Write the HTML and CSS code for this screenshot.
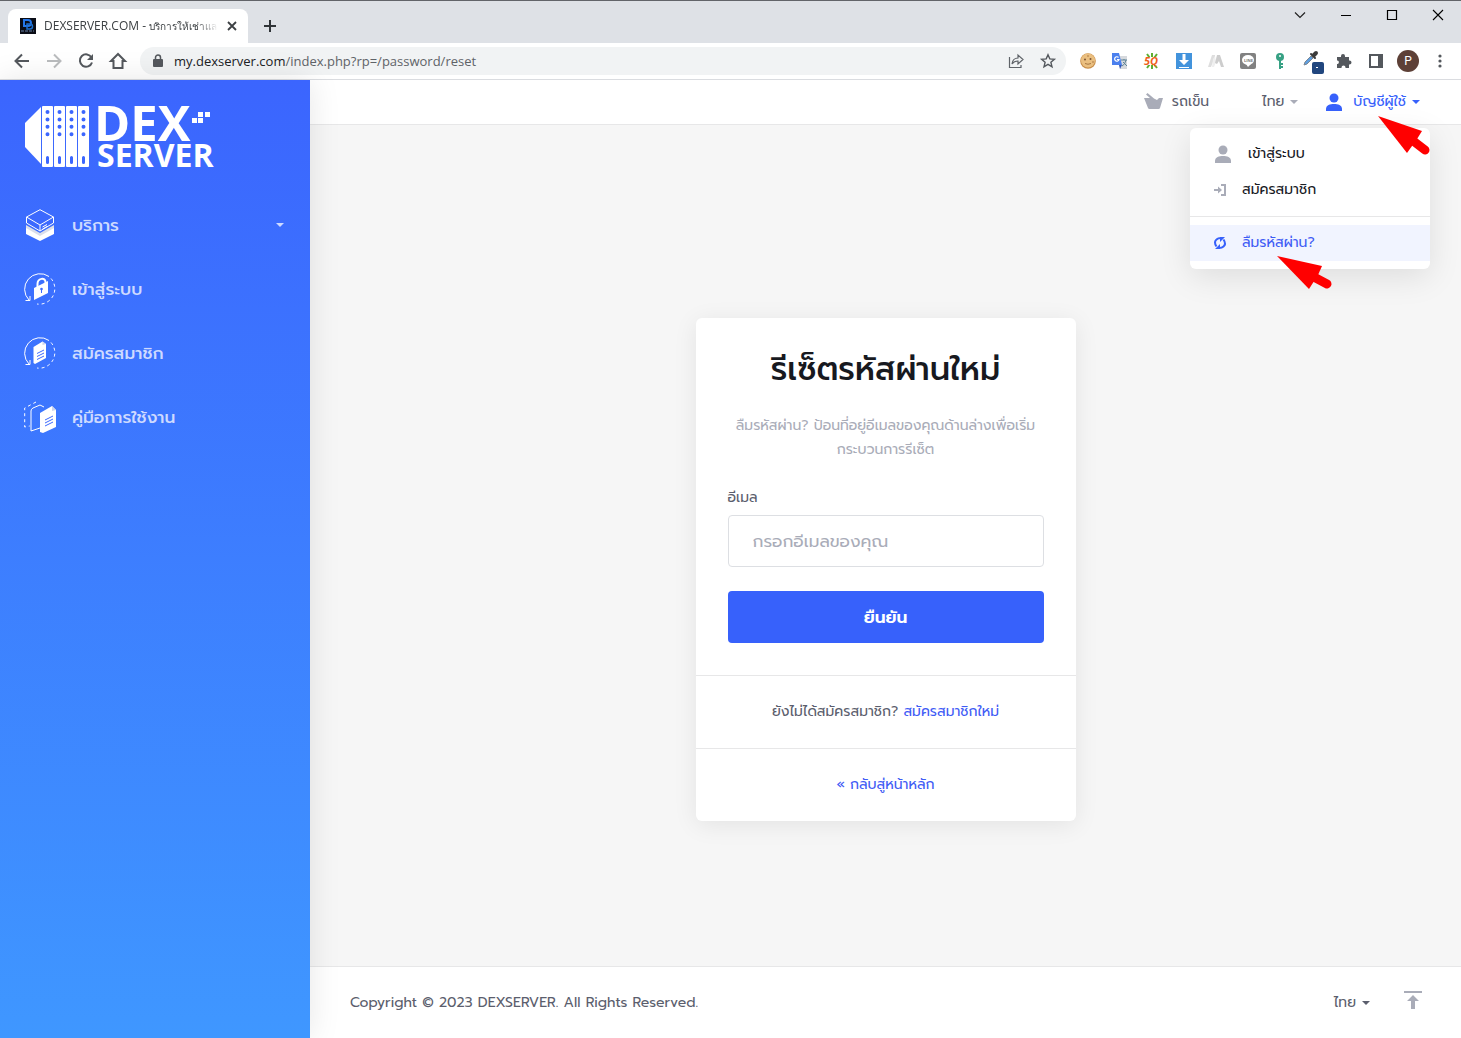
FILE: index.html
```
<!DOCTYPE html>
<html lang="th">
<head>
    <meta charset="UTF-8">
    <meta name="viewport" content="width=device-width, initial-scale=1.0">
    <title>DEXSERVER.COM</title>
    <link rel="stylesheet" href="styles.css">
</head>
<body>
    <div class="browser">
        <div class="tab-strip">
            <div class="tab">
                <svg class="favicon" width="16" height="16" viewBox="0 0 16 16"><rect width="16" height="16" fill="#0b0d16"/><path d="M4 2h4a3 3 0 0 1 0 6H4z" fill="none" stroke="#2476e8" stroke-width="2"/><path d="M7 6h3a2.500 2.500 0 0 1 0 5H7z" fill="none" stroke="#1c6fce" stroke-width="1.500"/><path d="M1 13h13" stroke="#39475f" stroke-width="2" stroke-dasharray="3 1"/></svg>
                <span class="tab-title">DEXSERVER.COM - <small>บริการให้เช่าและ</small></span>
                <button class="chrome-button tab-close" aria-label="Close tab"><svg width="10" height="10" viewBox="0 0 10 10"><path d="M1 1l8 8M9 1l-8 8" stroke="#3c4043" stroke-width="1.800"/></svg></button>
            </div>
            <button class="chrome-button new-tab" aria-label="New tab"><svg width="12" height="12" viewBox="0 0 12 12"><path d="M6 0v12M0 6h12" stroke="#2f3337" stroke-width="2"/></svg></button>
            <div class="window-buttons">
                <button class="chrome-button" aria-label="Search tabs"><svg width="12" height="12" viewBox="0 0 12 12"><path d="M1 3.500l5 5 5-5" fill="none" stroke="#222" stroke-width="1.200"/></svg></button>
                <button class="chrome-button" aria-label="Minimize"><svg width="12" height="12" viewBox="0 0 12 12"><path d="M1 6.500h10" stroke="#000"/></svg></button>
                <button class="chrome-button" aria-label="Maximize"><svg width="12" height="12" viewBox="0 0 12 12"><path d="M1.500 1.500h9v9h-9z" fill="none" stroke="#000" stroke-width="1.200"/></svg></button>
                <button class="chrome-button" aria-label="Close"><svg width="12" height="12" viewBox="0 0 12 12"><path d="M1 1l10 10M11 1L1 11" stroke="#000" stroke-width="1.100"/></svg></button>
            </div>
        </div>
        <div class="toolbar">
            <div class="nav-buttons">
                <button class="chrome-button" aria-label="Back"><svg width="16" height="16" viewBox="0 0 16 16"><path d="M15 8H2M8 1.500L1.500 8 8 14.500" fill="none" stroke="#54585d" stroke-width="2"/></svg></button>
                <button class="chrome-button" aria-label="Forward"><svg width="16" height="16" viewBox="0 0 16 16"><path d="M1 8h13M8 1.500L14.500 8 8 14.500" fill="none" stroke="#babcbe" stroke-width="2"/></svg></button>
                <button class="chrome-button" aria-label="Reload"><svg width="16" height="16" viewBox="0 0 16 16"><path d="M13.500 4.500A6.200 6.200 0 1 0 14 9.500" fill="none" stroke="#54585d" stroke-width="2"/><path d="M15 1v6H9z" fill="#54585d"/></svg></button>
                <button class="chrome-button" aria-label="Home"><svg width="18" height="18" viewBox="0 0 18 18"><path d="M9 2L2 9h2.500v7h9V9H16z" fill="none" stroke="#54585d" stroke-width="2"/></svg></button>
            </div>
            <div class="address-bar">
                <svg width="10" height="14" viewBox="0 0 10 14"><rect y="5" width="10" height="8" rx="1" fill="#54585d"/><path d="M2.500 6V3.500a2.500 2.500 0 0 1 5 0V6" fill="none" stroke="#54585d" stroke-width="1.500"/></svg>
                <div class="url">my.dexserver.com<span>/index.php?rp=/password/reset</span></div>
                <button class="chrome-button" aria-label="Share"><svg width="16" height="16" viewBox="0 0 16 16"><path d="M1.500 4v10.500H13V12M4 11c.5-4 3-6 6-6V2l5 4.500-5 4.500V8c-2.500 0-4.500.8-6 3z" fill="none" stroke="#5f6368" stroke-width="1.200"/></svg></button>
                <button class="chrome-button" aria-label="Bookmark"><svg width="16" height="16" viewBox="0 0 16 16"><path d="M8 1.800l1.800 4.100 4.600.4-3.500 3 1.100 4.500L8 11.400l-4 2.400 1.100-4.500-3.500-3 4.600-.4z" fill="none" stroke="#54585d" stroke-width="1.400"/></svg></button>
            </div>
            <div class="extensions">
                <button class="chrome-button" aria-label="Cookies"><svg width="16" height="16" viewBox="0 0 16 16"><circle cx="8" cy="8" r="7.800" fill="#c98f4a"/><circle cx="8" cy="7.500" r="7" fill="#eabf80"/><circle cx="5" cy="6.500" r="1" fill="#7b5433"/><circle cx="10.500" cy="6" r="1" fill="#7b5433"/><path d="M5 10.500q3 1.500 6 0" fill="none" stroke="#a87843"/><circle cx="8" cy="3" r=".8" fill="#a8733d"/><circle cx="13" cy="9" r=".8" fill="#a8733d"/></svg></button>
                <button class="chrome-button" aria-label="Translate"><svg width="18" height="18" viewBox="0 0 18 18"><path d="M7 4h9v13H9z" fill="#d6d9dd"/><path d="M10 8h6M13 7v1M15 8q-1 5-4 6M12 10l4 4" fill="none" stroke="#5d8396"/><path d="M1 1h7l3 12H1z" fill="#4b80ee"/><path d="M7.500 5.500a2.200 2.200 0 1 0 .5 2H6" fill="none" stroke="#fff" stroke-width="1.200"/><path d="M8 13h3l-2 4z" fill="#3157b7"/></svg></button>
                <button class="chrome-button" aria-label="SQ"><svg width="16" height="16" viewBox="0 0 16 16"><path d="M8 0v16M3 1l10 14M13 1L3 15" stroke="#5fae32" stroke-width="2"/><rect x="1" y="4" width="14" height="8" rx="2" fill="#fff"/><text class="ext-orange" x="0" y="12">5Q</text></svg></button>
                <button class="chrome-button" aria-label="Download"><svg width="16" height="16" viewBox="0 0 16 16"><rect width="16" height="16" fill="#4293dc"/><path d="M6.500 1h3v6H13l-5 5-5-5h3.500zM3 14h10v1H3z" fill="#fff"/></svg></button>
                <button class="chrome-button" aria-label="Analyzer"><svg width="16" height="16" viewBox="0 0 16 16"><path d="M4 2h3v2L3 14H0z" fill="#dedede"/><path d="M5 6l2-3 1 6-2 5H4z" fill="#efefef"/><path d="M9 2h3l4 12h-3L11 8l-2 3-2-1z" fill="#cdcdcd"/></svg></button>
                <button class="chrome-button" aria-label="LINE"><svg width="16" height="16" viewBox="0 0 16 16"><rect width="16" height="16" rx="2" fill="#818181"/><ellipse cx="8" cy="7" rx="6" ry="5" fill="#fff"/><path d="M6 11h5l-3 3z" fill="#fff"/><text class="ext-line" x="4" y="9">LINE</text></svg></button>
                <button class="chrome-button" aria-label="Key"><svg width="16" height="16" viewBox="0 0 16 16"><circle cx="8" cy="4" r="4" fill="#37a184"/><circle cx="8" cy="3" r="1" fill="#fff"/><path d="M8 7v9M8 11h3M8 14h3" stroke="#37a184" stroke-width="2"/></svg></button>
                <button class="chrome-button" aria-label="Color picker"><svg width="24" height="22" viewBox="0 0 24 22"><path d="M4 15l1-3 6-6 2 2-6 6z" fill="#5f9fe0" stroke="#7b8794"/><path d="M11 4l4 4" stroke="#3a3a3a" stroke-width="2" stroke-linecap="round"/><path d="M14 5l2-2" stroke="#3a3a3a" stroke-width="4" stroke-linecap="round"/><rect x="12" y="12" width="12" height="12" rx="2" fill="#21467e"/><path d="M16 17.500h2" stroke="#fff"/></svg></button>
                <button class="chrome-button" aria-label="Extensions"><svg width="16" height="16" viewBox="0 0 16 16"><path d="M1 4h4V3a2 2 0 0 1 4 0v1h4v3.500h.5a2 2 0 0 1 0 4H13V15H9.500v-.5a2 2 0 0 0-4 0v.5H1v-4h.5a1.800 1.800 0 0 0 0-3.500H1z" fill="#54585d"/></svg></button>
                <button class="chrome-button" aria-label="Side panel"><svg width="14" height="14" viewBox="0 0 14 14"><path d="M1 1h12v12H1z" fill="none" stroke="#54585d" stroke-width="2"/><path d="M9 1h4v12H9z" fill="#54585d"/></svg></button>
                <button class="chrome-button profile">P</button>
                <button class="chrome-button" aria-label="Menu"><svg width="4" height="16" viewBox="0 0 4 16"><circle cx="2" cy="3" r="1.600" fill="#54585d"/><circle cx="2" cy="8" r="1.600" fill="#54585d"/><circle cx="2" cy="13" r="1.600" fill="#54585d"/></svg></button>
            </div>
        </div>
    </div>

    <div class="page">
        <aside class="sidebar">
            <a class="logo" href="#" aria-label="DEX SERVER">
                <svg width="200" height="64" viewBox="0 0 200 64">
                    <path d="M17 3v57L1 43V19z" fill="#fff"/>
                    <g fill="#fff"><rect x="18" y="2" width="11" height="61" rx="1"/><rect x="30" y="2" width="11" height="61" rx="1"/><rect x="42" y="2" width="11" height="61" rx="1"/><rect x="54" y="2" width="11" height="61" rx="1"/></g>
                    <g stroke="#3b66fe" stroke-width="4" stroke-linecap="round" stroke-dasharray="0 7.400"><path d="M23.500 8v23M35.500 8v23M47.500 8v23M59.500 8v23"/></g>
                    <path d="M23.500 53.500v5M35.500 53.500v5M47.500 53.500v5M59.500 53.500v5" stroke="#3b66fe" stroke-width="3" stroke-linecap="round"/>
                    <text class="logo-dex" x="70" y="37">DEX</text>
                    <text class="logo-server" x="73" y="63">SERVER</text>
                    <path d="M174 8h5v5h-5zM181 8h5v5h-5zM168 14h5v5h-5zM174 14h5v5h-5z" fill="#fff"/>
                </svg>
            </a>
            <nav class="side-nav">
                <a class="side-link" href="#">
                    <svg width="32" height="32" viewBox="0 0 32 32"><path d="M2 16l14 8 14-8v4l-14 8-14-8z" fill="#dcdfe9"/><path d="M2 19l14 8 14-8v6l-14 7L2 25z" fill="#fff"/><path d="M2.500 8v6L16 22l13.500-8V8L16 .7z" fill="#3c69fe"/><path d="M16 .7L29.500 8 16 16 2.500 8zM2.500 8v6L16 22l13.500-8V8M16 16v6M18.500 18l4.500-2.500M18.500 20l4.500-2.500" fill="none" stroke="#fff"/></svg>
                    <span>บริการ</span><i class="caret"></i>
                </a>
                <a class="side-link" href="#">
                    <svg width="32" height="32" viewBox="0 0 32 32"><path d="M25 3.500A15.500 15.500 0 0 0 5 27M1.500 27.500H6V23" fill="none" stroke="#fff"/><path d="M27 5.500A15.500 15.500 0 0 1 13 31" fill="none" stroke="#fff" stroke-dasharray="3 3"/><path d="M10 15l14-7v12L10 27z" fill="#fff"/><path d="M13.500 14v-3c0-6 8-7 8-2v2" fill="none" stroke="#fff" stroke-width="2"/><circle cx="17.500" cy="16" r="1.300" fill="#3c6afe"/><path d="M17.500 16v4" stroke="#3c6afe"/></svg>
                    <span>เข้าสู่ระบบ</span>
                </a>
                <a class="side-link" href="#">
                    <svg width="32" height="32" viewBox="0 0 32 32"><path d="M25 3.500A15.500 15.500 0 0 0 5 27M1.500 27.500H6V23" fill="none" stroke="#fff"/><path d="M27 5.500A15.500 15.500 0 0 1 13 31" fill="none" stroke="#fff" stroke-dasharray="3 3"/><path d="M9.500 10l9-5.500L22 7v14l-11 6-1.500-1z" fill="#fff"/><path d="M18.500 4.500V8l3.500-1z" fill="#ccd5ec"/><path d="M13 16.500l7-3.500M13 19.500l7-3.500M13 22.500l7-3.500" stroke="#3c6afe"/></svg>
                    <span>สมัครสมาชิก</span>
                </a>
                <a class="side-link" href="#">
                    <svg width="32" height="32" viewBox="0 0 32 32"><path d="M12 1L.7 7v19l5-1" fill="none" stroke="#fff" stroke-dasharray="3 3"/><path d="M16 27l-9 3V10q0-2 2-3l7-3 4 2" fill="none" stroke="#fff"/><path d="M16 12l12-7 4 4v17l-13 6-3-1z" fill="#fff"/><path d="M28 5v5l4-1z" fill="#ccd5ec"/><path d="M21 19l8-4M21 22l8-4M21 25l8-4" stroke="#3c6afe"/></svg>
                    <span>คู่มือการใช้งาน</span>
                </a>
            </nav>
        </aside>

        <div class="content">
            <header class="topbar">
                <a class="top-link cart" href="#"><svg width="20" height="18" viewBox="0 0 20 18"><path d="M0 5h6L2 1.500 3.500 0 10 5.500l3 1.500 2-2h4l-3 10q-.3 1-1.500 1h-9q-1.200 0-1.500-1z" fill="#a9acb8"/></svg>รถเข็น</a>
                <a class="top-link language" href="#">ไทย<i class="caret"></i></a>
                <div class="account">
                    <a class="top-link active" href="#"><svg width="18" height="20" viewBox="0 0 18 20"><circle cx="9" cy="6" r="4.500" fill="#3761fb"/><path d="M1 19v-2c0-4 4-5 8-5s8 1 8 5v2z" fill="#3761fb"/></svg>บัญชีผู้ใช้<i class="caret"></i></a>
                    <div class="menu">
                        <a class="menu-item" href="#"><svg width="18" height="20" viewBox="0 0 18 20"><circle cx="9" cy="6" r="4.500" fill="#a9acb8"/><path d="M1 19v-2c0-4 4-5 8-5s8 1 8 5v2z" fill="#a9acb8"/></svg>เข้าสู่ระบบ</a>
                        <a class="menu-item" href="#"><svg width="12" height="12" viewBox="0 0 12 12"><path d="M0 6h5" stroke="#a9acb8" stroke-width="2"/><path d="M4 2.500L8 6 4 9.500z" fill="#a9acb8"/><path d="M7 1h4v10H7" fill="none" stroke="#a9acb8" stroke-width="2"/></svg>สมัครสมาชิก</a>
                        <hr class="menu-divider">
                        <a class="menu-item selected" href="#"><svg width="12" height="12" viewBox="0 0 12 12"><path d="M2.500 9.500Q-.5 5 2.500 2.500 4 1 7 1M9.500 2.500q3 4.500 0 7Q8 11 5 11" fill="none" stroke="#3761fb" stroke-width="2"/><path d="M6 0h5L6 5zM6 12H1l5-5z" fill="#3761fb"/></svg>ลืมรหัสผ่าน?</a>
                        <svg class="pointer pointer-account" width="52" height="40" viewBox="0 0 52 40"><path d="M0 0l44 15-5 8-10 14z" fill="#f00"/><path d="M34 24l13 10" stroke="#f00" stroke-width="9" stroke-linecap="round"/></svg>
                        <svg class="pointer pointer-reset" width="55" height="35" viewBox="0 0 55 35"><path d="M0 0l45 10-4 9-9 14z" fill="#f00"/><path d="M35 20l15 8" stroke="#f00" stroke-width="9" stroke-linecap="round"/></svg>
                    </div>
                </div>
            </header>

            <main class="main">
                <div class="card">
                    <form class="card-body">
                        <h1>รีเซ็ตรหัสผ่านใหม่</h1>
                        <p>ลืมรหัสผ่าน? ป้อนที่อยู่อีเมลของคุณด้านล่างเพื่อเริ่ม<br>กระบวนการรีเซ็ต</p>
                        <label for="email">อีเมล</label>
                        <input type="email" id="email" placeholder="กรอกอีเมลของคุณ">
                        <button class="submit-button" type="submit">ยืนยัน</button>
                    </form>
                    <div class="card-row">ยังไม่ได้สมัครสมาชิก? <a href="#">สมัครสมาชิกใหม่</a></div>
                    <div class="card-row"><a href="#">« กลับสู่หน้าหลัก</a></div>
                </div>
            </main>

            <footer class="footer">
                <span class="copyright">Copyright © 2023 DEXSERVER. All Rights Reserved.</span>
                <a class="top-link" href="#">ไทย<i class="caret"></i></a>
                <a class="to-top" href="#" aria-label="Top"><svg width="18" height="24" viewBox="0 0 18 24"><path d="M0 0h18v2H0zM9 4l6 6h-4v8H7v-8H3z" fill="#a9acb8"/></svg></a>
            </footer>
        </div>
    </div>
</body>
</html>
```
FILE: styles.css
```
* {
    box-sizing: border-box;
}
body {
    margin: 0;
    min-height: 100vh;
    display: flex;
    flex-direction: column;
    font-family: Prompt, "Noto Sans Thai", "Noto Sans", sans-serif;
    font-size: 14px;
    line-height: 24px;
    color: #5b5e6d;
    background-color: #f6f6f6;
}
a {
    color: #3f5cf5;
    text-decoration: none;
}
svg {
    flex: none;
    display: block;
    overflow: visible;
}

/* browser window */
.browser {
    font-family: "Open Sans", "Noto Sans", sans-serif;
    background-color: #ffffff;
    border-bottom: 1px solid #dadce0;
}
.chrome-button {
    display: flex;
    align-items: center;
    justify-content: center;
    flex: none;
    padding: 0;
    border: none;
    background: none;
}
.tab-strip {
    display: flex;
    height: 43px;
    padding-left: 8px;
    background-color: #dee1e6;
    border-top: 1px solid #626469;
}
.tab {
    display: flex;
    align-items: center;
    width: 240px;
    margin-top: 8px;
    padding: 0 10px 0 12px;
    border-radius: 8px 8px 0 0;
    background-color: #ffffff;
}
.tab-title {
    flex: 1;
    margin: 0 8px;
    overflow: hidden;
    white-space: nowrap;
    font-size: 12px;
    color: #3c4043;
    mask-image: linear-gradient(to right, #000 88%, transparent);
}
.tab-title small {
    font-size: 10px;
}
.tab-close {
    width: 12px;
}
.new-tab {
    width: 28px;
    margin: 8px 0 0 8px;
}
.window-buttons {
    display: flex;
    height: 28px;
    margin-left: auto;
}
.window-buttons .chrome-button {
    width: 46px;
}
.toolbar {
    display: flex;
    align-items: center;
    height: 36px;
    padding-left: 6px;
}
.nav-buttons {
    display: flex;
    margin-right: 6px;
}
.nav-buttons .chrome-button {
    width: 32px;
}
.address-bar {
    display: flex;
    align-items: center;
    flex: 1;
    height: 28px;
    padding: 0 10px 0 13px;
    border-radius: 14px;
    background-color: #f1f3f4;
}
.url {
    flex: 1;
    margin-left: 11px;
    font-size: 13px;
    color: #202124;
}
.url span {
    color: #5f6368;
}
.address-bar .chrome-button {
    margin-left: 16px;
}
.extensions {
    display: flex;
    align-items: center;
    padding: 0 5px 0 6px;
}
.extensions .chrome-button {
    width: 32px;
}
.ext-orange {
    font: italic bold 11px "Open Sans", sans-serif;
    fill: #f0601a;
}
.ext-line {
    font: bold 4px "Open Sans", sans-serif;
    fill: #777777;
}
.extensions .profile {
    width: 22px;
    height: 22px;
    margin: 0 5px;
    border-radius: 50%;
    background-color: #5d4037;
    color: #ffffff;
    font: 12px Roboto, sans-serif;
}

/* page */
.page {
    display: flex;
    flex: 1;
}
.sidebar {
    width: 310px;
    flex: none;
    padding: 24px;
    background: linear-gradient(#3b65fe, #3f97ff);
    box-shadow: 0 0 30px rgba(0, 0, 0, 0.1);
    z-index: 1;
}
.logo {
    display: block;
}
.logo-dex,
.logo-server {
    font-family: "Open Sans", sans-serif;
    font-weight: 700;
    fill: #ffffff;
}
.logo-dex {
    font-size: 49px;
}
.logo-server {
    font-size: 32px;
}
.side-nav {
    display: flex;
    flex-direction: column;
    gap: 32px;
    margin-top: 41px;
}
.side-link {
    display: flex;
    align-items: center;
    gap: 16px;
    height: 32px;
    font-size: 17px;
    font-weight: 500;
    color: #cedaff;
}
.side-link .caret {
    margin-left: auto;
    margin-right: 2px;
}
.caret {
    border: 4px solid transparent;
    border-top-color: currentColor;
    border-bottom: none;
}
.content {
    display: flex;
    flex-direction: column;
    flex: 1;
    min-width: 0;
}
.topbar {
    display: flex;
    align-items: center;
    justify-content: flex-end;
    height: 45px;
    padding-right: 41px;
    background-color: #ffffff;
    border-bottom: 1px solid #e7e7e8;
}
.top-link {
    display: flex;
    align-items: center;
    gap: 6px;
    color: #5b5e6d;
}
.cart {
    gap: 8px;
    margin-right: 53px;
}
.language {
    margin-right: 27px;
}
.language .caret {
    color: #a9acb8;
}
.account {
    position: relative;
}
.top-link.active {
    color: #3761fb;
}
.active svg {
    margin-right: 4px;
}
.menu {
    position: absolute;
    top: 38px;
    right: -10px;
    width: 240px;
    padding: 8px 0;
    border-radius: 6px;
    background-color: #ffffff;
    box-shadow: 0 8px 32px rgba(0, 0, 0, 0.1);
}
.menu-item {
    display: flex;
    align-items: center;
    gap: 16px;
    height: 36px;
    padding: 0 24px;
    color: #17191f;
}
.menu-divider {
    margin: 8px 0;
    border: none;
    border-top: 1px solid #e7e7e8;
}
.menu-item.selected {
    color: #3f5cf5;
    background-color: #f1f4ff;
}
.pointer {
    position: absolute;
}
.pointer-account {
    top: -12px;
    right: 0;
}
.pointer-reset {
    top: 128px;
    left: 87px;
}
.main {
    display: flex;
    align-items: center;
    justify-content: center;
    flex: 1;
    padding-top: 48px;
}
.card {
    width: 380px;
    border-radius: 6px;
    background-color: #ffffff;
    box-shadow: 0 4px 24px rgba(0, 0, 0, 0.08);
}
.card-body {
    display: flex;
    flex-direction: column;
    padding: 32px;
}
.card h1 {
    margin: 0 0 24px;
    font-size: 32px;
    font-weight: 500;
    line-height: 40px;
    text-align: center;
    color: #17191f;
}
.card p {
    margin: 0 0 24px;
    text-align: center;
    white-space: nowrap;
    color: #a9acb8;
}
.card input {
    height: 52px;
    margin: 5px 0 24px;
    padding: 0 24px;
    border: 1px solid #dddfe3;
    border-radius: 4px;
    font: inherit;
    font-size: 17px;
}
.card input::placeholder {
    color: #a9acb8;
}
.submit-button {
    height: 52px;
    border: none;
    border-radius: 4px;
    background-color: #3761fb;
    color: #ffffff;
    font: inherit;
    font-size: 17px;
    font-weight: 600;
}
.card-row {
    padding: 24px;
    border-top: 1px solid #e7e7e8;
    text-align: center;
}
.footer {
    display: flex;
    align-items: center;
    height: 72px;
    padding: 0 39px 0 40px;
    background-color: #ffffff;
    border-top: 1px solid #e7e7e8;
}
.copyright {
    flex: 1;
}
.to-top {
    margin-left: 34px;
}
```
